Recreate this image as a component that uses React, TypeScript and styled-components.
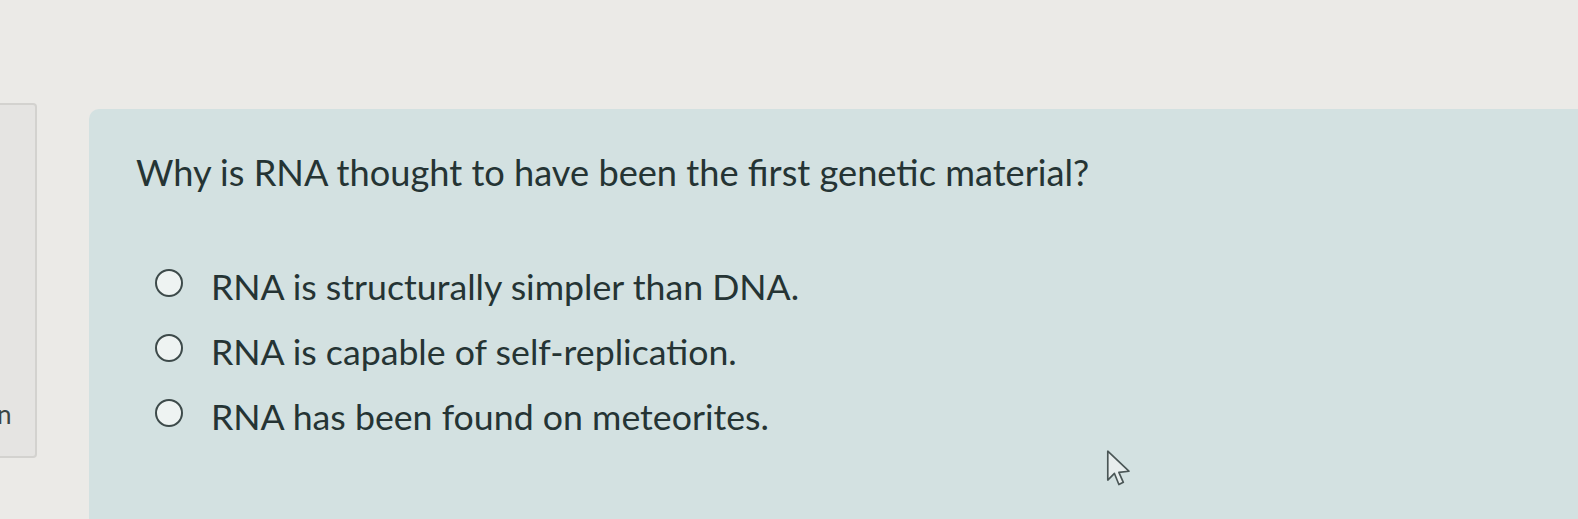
import styled, { createGlobalStyle } from 'styled-components';

const GlobalStyle = createGlobalStyle`
  html, body {
    margin: 0;
    padding: 0;
    background: #ebeae7;
    font-family: Lato, "Open Sans", sans-serif;
    overflow: hidden;
  }
`;

const options = [
  'RNA is structurally simpler than DNA.',
  'RNA is capable of self-replication.',
  'RNA has been found on meteorites.',
];

const Page = styled.div`
  width: 1578px;
  height: 519px;
  display: flex;
  padding-top: 103px;
  box-sizing: border-box;
  gap: 52px;
  position: relative;
`;

const SideCard = styled.div`
  width: 37px;
  height: 355px;
  flex-shrink: 0;
  box-sizing: border-box;
  background: #e5e4e2;
  border: 2px solid #d3d2cf;
  border-left: none;
  border-radius: 0 4px 4px 0;
  display: flex;
  align-items: flex-end;
  overflow: hidden;
  color: #3a4444;
  font-size: 26px;
  padding-bottom: 26px;
  text-indent: -3px;
`;

const Panel = styled.div`
  flex: 1;
  margin-top: 6px;
  background: #d3e1e1;
  border-radius: 10px 0 0 0;
  padding: 38px 0 0 47px;
  color: #253434;
`;

const Question = styled.h1`
  margin: 0 0 64px;
  font-size: 36.2px;
  font-weight: 400;
  line-height: 50px;
`;

const OptionList = styled.div`
  display: flex;
  flex-direction: column;
  gap: 13px;
  padding-left: 19px;
`;

const Option = styled.label`
  display: flex;
  align-items: center;
  gap: 28px;
  font-size: 35.7px;
  line-height: 52px;
`;

const Radio = styled.span`
  width: 24px;
  height: 24px;
  margin-bottom: 8px;
  border: 2.5px solid #3d4a4a;
  border-radius: 50%;
  background: #eef3f2;
  flex-shrink: 0;
`;

const Cursor = styled.svg`
  position: absolute;
  left: 1105px;
  top: 449px;
`;

export default function App() {
  return (
    <>
      <GlobalStyle />
      <Page>
        <SideCard>n</SideCard>
        <Panel>
          <Question>Why is RNA thought to have been the first genetic material?</Question>
          <OptionList>
            {options.map((o) => (
              <Option key={o}>
                <Radio />
                {o}
              </Option>
            ))}
          </OptionList>
        </Panel>
        <Cursor width="30" height="40" viewBox="0 0 26 36">
          <path d="M2 2 L2 28 L8 22 L12 32 L16 30 L12 21 L21 20 Z" fill="#e8eeee" stroke="#4a5656" strokeWidth="1.5" strokeLinejoin="round" />
        </Cursor>
      </Page>
    </>
  );
}
